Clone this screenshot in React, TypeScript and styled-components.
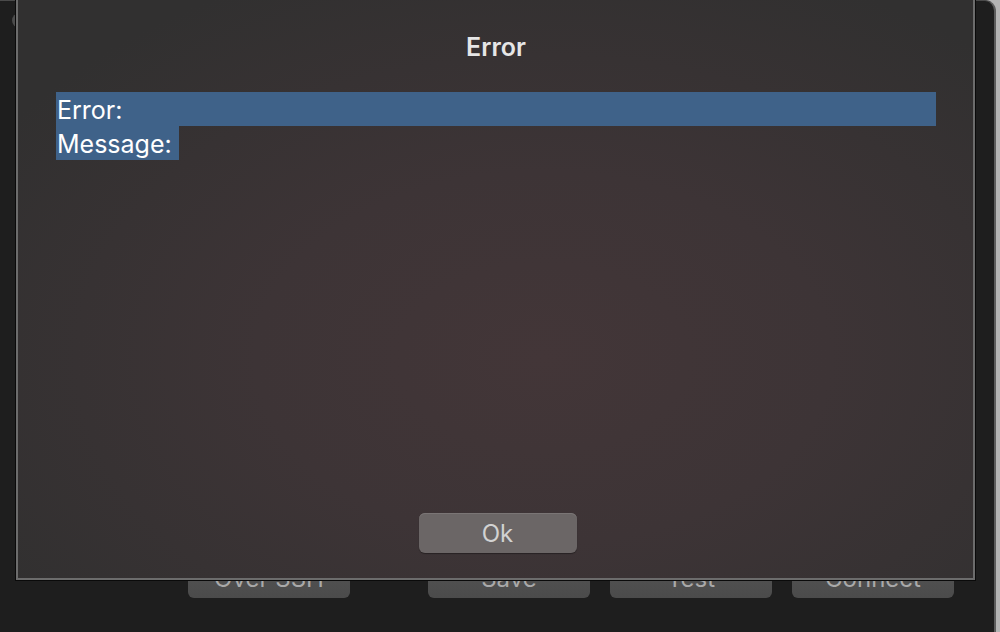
import React from "react";
import styled, { createGlobalStyle } from "styled-components";

const GlobalStyle = createGlobalStyle`
  html, body {
    margin: 0;
    padding: 0;
    background: #b4b4b4;
  }
  body {
    font-family: Inter, "Noto Sans", "Liberation Sans", sans-serif;
    -webkit-font-smoothing: antialiased;
  }
`;

const Screen = styled.div`
  position: relative;
  width: 1000px;
  height: 632px;
  overflow: hidden;
  display: flex;
  background: #b4b4b4;
`;

const Window = styled.div`
  flex: 0 0 996px;
  height: 632px;
  box-sizing: border-box;
  background: #1e1e1e;
  border-top: 1px solid #4a4a4a;
  border-right: 2px solid #5c5c5c;
  border-top-right-radius: 11px;
  display: flex;
  flex-direction: column;
`;

const TitleBar = styled.div`
  display: flex;
  gap: 8px;
  padding: 12px 0 0 12px;
`;

const Light = styled.span`
  width: 15px;
  height: 15px;
  border-radius: 50%;
  background: #4c4c4c;
`;

const Spacer = styled.div`
  flex: 1;
`;

const ButtonRow = styled.div`
  display: flex;
  padding: 0 0 34px 188px;
`;

const BackButton = styled.div<{ $gap?: number }>`
  width: 162px;
  height: 40px;
  margin-left: ${(p) => p.$gap ?? 0}px;
  box-sizing: border-box;
  border-radius: 6px;
  background: linear-gradient(#555555, #4b4b4b);
  color: #a9a9a9;
  font-size: 24px;
  display: flex;
  align-items: center;
  justify-content: center;
`;

const Dialog = styled.div`
  position: absolute;
  left: 16px;
  top: -4px;
  width: 959px;
  height: 584px;
  box-sizing: border-box;
  border: 2px solid #6c6c6c;
  box-shadow: 0 0 0 1px #0a0a0a;
  background: radial-gradient(
    ellipse 75% 80% at 55% 62%,
    #433638 0%,
    #3d3436 40%,
    #313030 90%
  );
  display: flex;
  flex-direction: column;
  padding: 34px 37px 25px 38px;
`;

const Title = styled.div`
  text-align: center;
  color: #e6e6e6;
  font-size: 25px;
  font-weight: 600;
  line-height: 30px;
`;

const TextArea = styled.div`
  margin-top: 30px;
  color: #ffffff;
  font-size: 25px;
  font-weight: 400;
`;

const SelectedLine = styled.div`
  height: 34px;
  box-sizing: border-box;
  padding: 3px 0 0 1px;
  line-height: 31px;
  background: #3f6289;
`;

const Line = styled.div`
  height: 34px;
`;

const SelectedSpan = styled.span`
  display: inline-block;
  height: 34px;
  box-sizing: border-box;
  padding: 3px 0 0 1px;
  line-height: 31px;
  background: #3f6289;
  white-space: pre;
`;

const OkButton = styled.button`
  align-self: center;
  margin-left: 3px;
  width: 158px;
  height: 40px;
  border: none;
  border-radius: 6px;
  background: #6b6666;
  box-shadow: inset 0 1px 0 #7a7575, 0 1px 1px rgba(0, 0, 0, 0.35);
  color: #d2d2d2;
  font-family: Inter, "Noto Sans", "Liberation Sans", sans-serif;
  font-size: 24px;
  padding: 0;
`;

export default function App() {
  return (
    <>
      <GlobalStyle />
      <Screen>
        <Window>
          <TitleBar>
            <Light />
            <Light />
            <Light />
          </TitleBar>
          <Spacer />
          <ButtonRow>
            <BackButton>Over SSH</BackButton>
            <BackButton $gap={78}>Save</BackButton>
            <BackButton $gap={20}>Test</BackButton>
            <BackButton $gap={20}>Connect</BackButton>
          </ButtonRow>
        </Window>
        <Dialog>
          <Title>Error</Title>
          <TextArea>
            <SelectedLine>Error:</SelectedLine>
            <Line>
              <SelectedSpan>Message: </SelectedSpan>
            </Line>
          </TextArea>
          <Spacer />
          <OkButton>Ok</OkButton>
        </Dialog>
      </Screen>
    </>
  );
}
